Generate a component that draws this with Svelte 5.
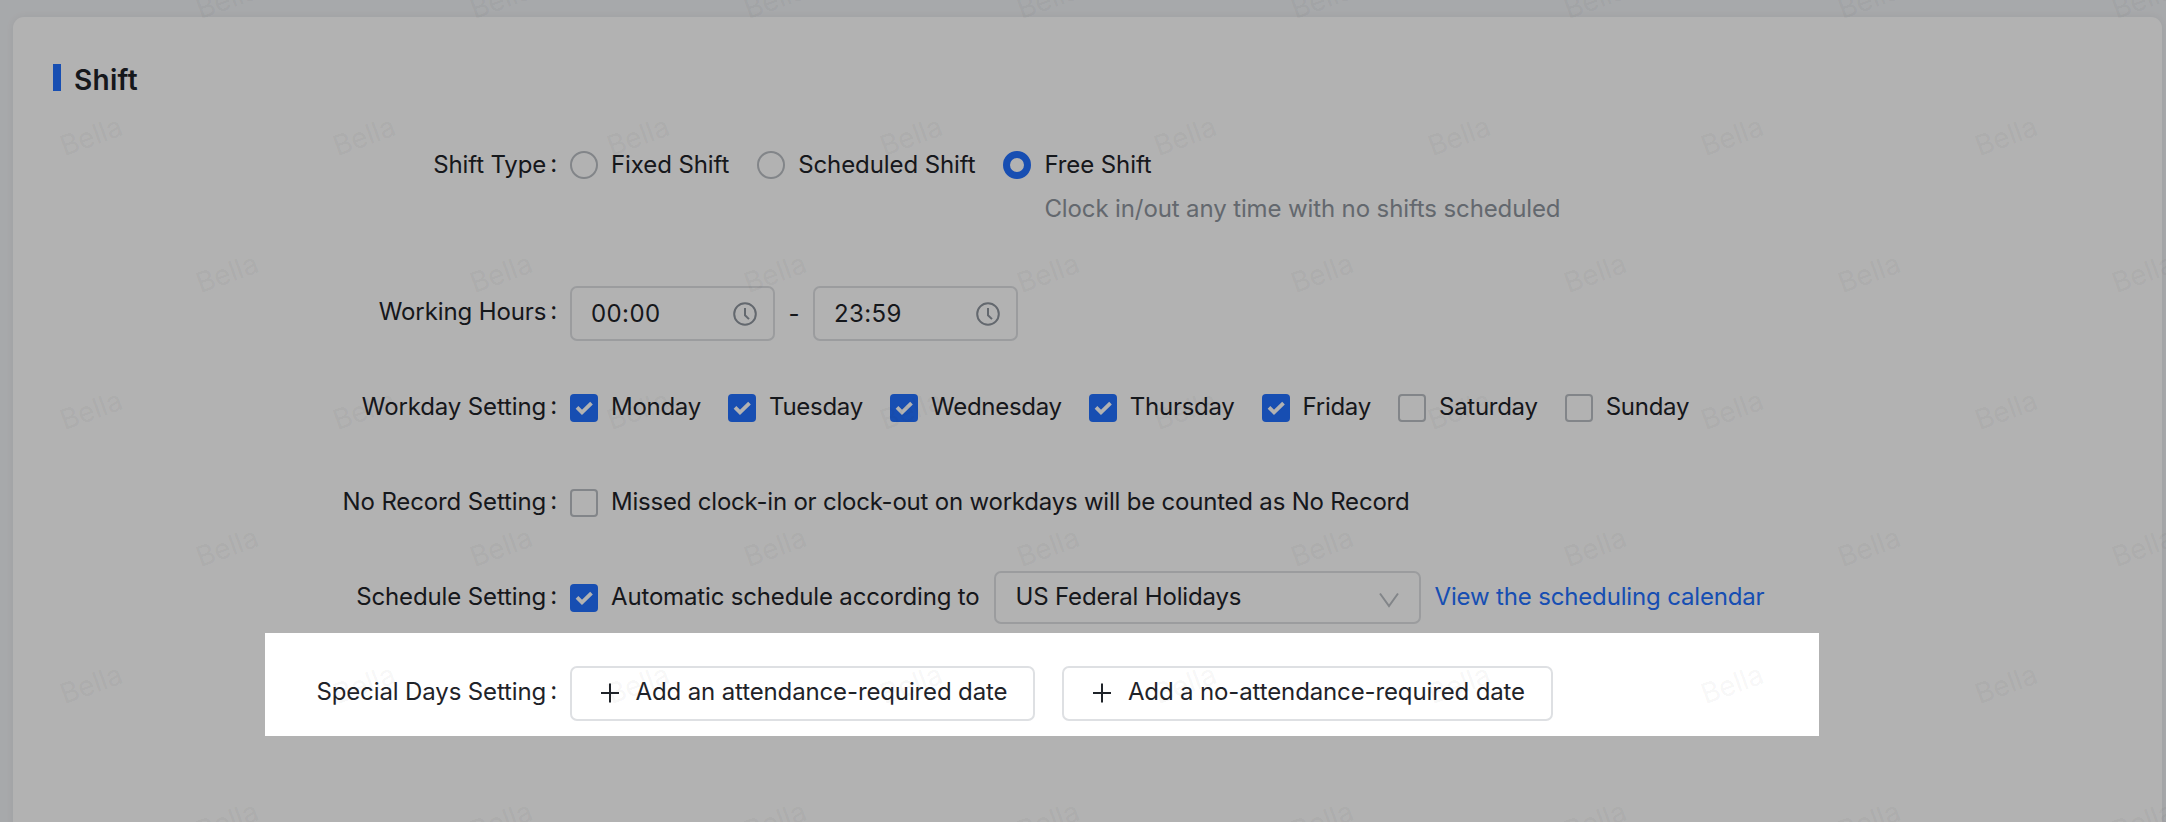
<script>
  const shiftTypes = [
    { name: 'Fixed Shift', selected: false },
    { name: 'Scheduled Shift', selected: false },
    { name: 'Free Shift', selected: true, hint: 'Clock in/out any time with no shifts scheduled' }
  ];
  const hours = ['00:00', '23:59'];
  const days = [
    ['Monday', true],
    ['Tuesday', true],
    ['Wednesday', true],
    ['Thursday', true],
    ['Friday', true],
    ['Saturday', false],
    ['Sunday', false]
  ];
  const specialActions = ['Add an attendance-required date', 'Add a no-attendance-required date'];

  // Watermark stamps on a staggered grid
  const step = 136.8;
  const marks = [];
  for (let r = 0; r <= 6; r++) {
    for (let c = 0; c < 8; c++) {
      marks.push({ x: 90.5 + c * step * 2 + (r % 2 ? 0 : step), y: r * 137 - 1.5 });
    }
  }
</script>

{#snippet label(text)}
  <div class="label">{text}<span class="colon">:</span></div>
{/snippet}

{#snippet box(on)}
  <span class="box" class:on>
    {#if on}
      <svg width="28" height="28" viewBox="0 0 28 28"><path d="M7 13.4 12 18.4 21.5 9.2" /></svg>
    {/if}
  </span>
{/snippet}

<main>
  <section class="card">
    <h2><i></i><span>Shift</span></h2>

    <div class="rows">
      <div class="row tall">
        {@render label('Shift Type')}
        <div class="options types">
          {#each shiftTypes as type}
            <div class="radio">
              <span class="dot" class:on={type.selected}></span>
              <div class="radio-text">
                <span class="text">{type.name}</span>
                {#if type.hint}<span class="hint">{type.hint}</span>{/if}
              </div>
            </div>
          {/each}
        </div>
      </div>

      <div class="row">
        {@render label('Working Hours')}
        <div class="times">
          {#each hours as time, i}
            {#if i}<span class="dash">-</span>{/if}
            <div class="field">
              <span>{time}</span>
              <svg width="24" height="24" viewBox="0 0 24 24">
                <circle cx="12" cy="12" r="10.8" />
                <path d="M12 6v7.3l4 3.8" />
              </svg>
            </div>
          {/each}
        </div>
      </div>

      <div class="row">
        {@render label('Workday Setting')}
        <div class="options">
          {#each days as [day, on]}
            <div class="check">{@render box(on)}<span class="text day">{day}</span></div>
          {/each}
        </div>
      </div>

      <div class="row">
        {@render label('No Record Setting')}
        <div class="check">
          {@render box(false)}
          <span class="text sentence">Missed clock-in or clock-out on workdays will be counted as No Record</span>
        </div>
      </div>

      <div class="row">
        {@render label('Schedule Setting')}
        <div class="check">{@render box(true)}<span class="text long">Automatic schedule according to</span></div>
        <div class="select">
          <span class="text long">US Federal Holidays</span>
          <svg width="20" height="16" viewBox="0 0 20 16"><path d="M1 1.5 10 14 19 1.5" /></svg>
        </div>
        <a class="text long">View the scheduling calendar</a>
      </div>

      <div class="row">
        {@render label('Special Days Setting')}
        <div class="actions">
          {#each specialActions as action}
            <button>
              <svg width="18" height="20" viewBox="0 0 18 20"><path d="M9 .5v19M0 10h18" /></svg>
              <span class="text">{action}</span>
            </button>
          {/each}
        </div>
      </div>
    </div>
  </section>

  <div class="marks">
    {#each marks as m}
      <span style="left:{m.x}px;top:{m.y}px">Bella</span>
    {/each}
  </div>
  <div class="spotlight"></div>
</main>

<style>
  main {
    position: relative;
    box-sizing: border-box;
    height: 822px;
    overflow: hidden;
    padding: 17px 4px 0 13px;
    background: #f0f2f5;
    color: #1f2329;
    font: 24px/30px Inter, sans-serif;
    white-space: nowrap;
  }
  .card {
    box-sizing: border-box;
    height: 860px;
    padding: 47px 40px 0;
    border-radius: 11px;
    background: #fff;
    box-shadow: 0 0 8px rgba(31, 35, 41, 0.06);
  }
  h2 {
    display: flex;
    align-items: center;
    gap: 13px;
    height: 27px;
    margin: 0;
    font-size: 28px;
    font-weight: 600;
    line-height: 27px;
    letter-spacing: 0.3px;
  }
  h2 i {
    width: 8px;
    height: 27px;
    background: #2270ff;
  }
  h2 span {
    padding-top: 5px;
  }
  .rows {
    display: flex;
    flex-direction: column;
    gap: 40px;
    padding-top: 47px;
  }
  .row {
    display: flex;
    align-items: center;
    height: 55px;
  }
  .tall {
    align-items: flex-start;
    height: 108px;
  }
  .label {
    width: 504px;
    margin-right: 13px;
    padding-bottom: 3px;
    text-align: right;
    letter-spacing: -0.12px;
  }
  .tall .label {
    padding-top: 12px;
  }
  .colon {
    margin-left: 4px;
    vertical-align: 1px;
    line-height: 1;
  }
  .text {
    padding-bottom: 3px;
    letter-spacing: -0.1px;
  }
  .day {
    letter-spacing: -0.28px;
  }
  .long {
    letter-spacing: -0.16px;
  }
  .sentence {
    letter-spacing: -0.21px;
  }
  .options {
    display: flex;
    gap: 27.1px;
  }
  .types {
    gap: 28px;
  }
  .check,
  .radio {
    display: flex;
    align-items: center;
    gap: 13px;
  }
  .radio {
    align-items: flex-start;
    padding-top: 12px;
  }
  .radio-text {
    display: flex;
    flex-direction: column;
    gap: 11px;
  }
  .hint {
    color: #8f959e;
    letter-spacing: -0.12px;
  }
  .dot {
    box-sizing: border-box;
    width: 28px;
    height: 28px;
    margin-top: 1px;
    border: 2px solid #bbbfc4;
    border-radius: 50%;
  }
  .dot.on {
    border: 7px solid #2270ff;
  }
  .box {
    box-sizing: border-box;
    width: 28px;
    height: 28px;
    margin-bottom: 2px;
    border: 2px solid #bbbfc4;
    border-radius: 4px;
  }
  .box.on {
    border: 0;
    background: #2270ff;
  }
  svg {
    display: block;
    fill: none;
  }
  .box path {
    stroke: #fff;
    stroke-width: 3.8;
  }
  .times,
  .actions {
    display: flex;
    align-items: center;
  }
  .field {
    box-sizing: border-box;
    display: flex;
    align-items: center;
    justify-content: space-between;
    width: 205px;
    height: 55px;
    padding: 0 16px 0 19px;
    border: 2px solid #dee0e3;
    border-radius: 7px;
    letter-spacing: 0.4px;
  }
  .field svg {
    stroke: #8f959e;
    stroke-width: 2;
  }
  .dash {
    width: 38px;
    text-align: center;
  }
  .select {
    box-sizing: border-box;
    display: flex;
    align-items: center;
    justify-content: space-between;
    width: 427px;
    height: 53px;
    margin: 0 14px 2px 14px;
    padding: 0 20px 0 20px;
    border: 2px solid #dee0e3;
    border-radius: 7px;
  }
  .select .text {
    padding-bottom: 1px;
  }
  .select svg {
    margin-top: 4px;
    stroke: #bbbfc4;
    stroke-width: 2;
  }
  a {
    color: #2270ff;
  }
  .actions {
    gap: 27px;
  }
  button {
    box-sizing: border-box;
    display: flex;
    align-items: center;
    gap: 17px;
    height: 55px;
    padding: 0 26px 0 28.5px;
    border: 2px solid #dee0e3;
    border-radius: 7px;
    background: #fff;
    color: inherit;
    font: inherit;
  }
  button .text {
    letter-spacing: -0.13px;
  }
  button svg {
    margin-bottom: 2px;
    stroke: #1f2329;
    stroke-width: 2;
  }
  .marks {
    position: absolute;
    inset: 0;
    pointer-events: none;
  }
  .marks span {
    position: absolute;
    color: rgba(31, 35, 41, 0.055);
    font-size: 28px;
    transform: translate(-50%, -50%) rotate(-20deg);
  }
  .spotlight {
    position: absolute;
    left: 265px;
    top: 633px;
    width: 1554px;
    height: 103px;
    box-shadow: 0 0 0 2200px rgba(0, 0, 0, 0.3);
  }
</style>
